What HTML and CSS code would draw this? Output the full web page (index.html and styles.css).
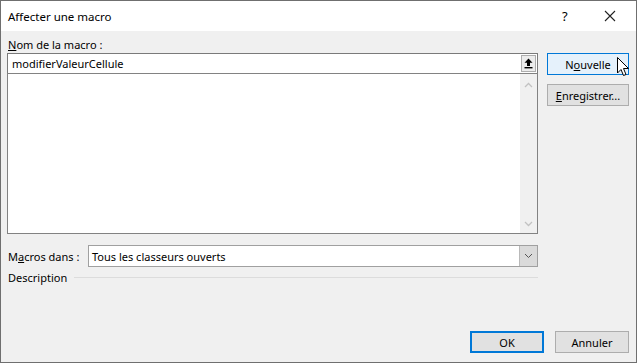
FILE: index.html
```html
<!DOCTYPE html>
<html>
  <head>
    <title>Affecter une macro</title>
    <link rel="stylesheet" href="styles.css">
  </head>
  <body>
    <div class="window">
      <div class="titlebar">
        <span class="title">Affecter une macro</span>
        <span class="help">?</span>
        <span class="close">
          <svg width="12" height="12" viewBox="0 0 12 12"><path d="M1 1 L11 11 M11 1 L1 11" stroke="#222" stroke-width="1.1" fill="none"/></svg>
        </span>
      </div>
      <div class="content">
        <div class="main">
          <div class="label"><u>N</u>om de la macro :</div>
          <div class="namebox">
            <span class="nametext">modifierValeurCellule</span>
            <span class="upbtn">
              <svg width="9" height="11" viewBox="0 0 9 11"><path d="M4.5 0.5 L8.5 4.8 L6 4.8 L6 8 L3 8 L3 4.8 L0.5 4.8 Z" fill="#000"/><rect x="0.5" y="9" width="8" height="1.4" fill="#000"/></svg>
            </span>
          </div>
          <div class="listbox">
            <div class="listarea"></div>
            <div class="scrollbar">
              <svg width="9" height="6" viewBox="0 0 9 6"><path d="M1 5 L4.5 1.5 L8 5" stroke="#c2c2c2" stroke-width="1.3" fill="none"/></svg>
              <svg width="9" height="6" viewBox="0 0 9 6"><path d="M1 1 L4.5 4.5 L8 1" stroke="#c2c2c2" stroke-width="1.3" fill="none"/></svg>
            </div>
          </div>
          <div class="row">
            <span class="label2">M<u>a</u>cros dans :</span>
            <div class="combo">
              <span class="combotext">Tous les classeurs ouverts</span>
              <span class="dropbtn">
                <svg width="9" height="6" viewBox="0 0 9 6"><path d="M1 1 L4.5 4.5 L8 1" stroke="#555" stroke-width="1" fill="none"/></svg>
              </span>
            </div>
          </div>
          <div class="desc">
            <span>Description</span>
            <span class="rule"></span>
          </div>
        </div>
        <div class="side">
          <div class="btn hover">N<u>o</u>uvelle
            <svg class="cursor" width="13" height="20" viewBox="0 0 13 20"><path d="M0.5 0.5 L0.5 16 L4 12.5 L6.5 18.5 L9 17.5 L6.5 11.5 L11.5 11.5 Z" fill="#fff" stroke="#000" stroke-width="1"/></svg>
          </div>
          <div class="btn"><u>E</u>nregistrer...</div>
        </div>
      </div>
      <div class="footer">
        <div class="btn fbtn default">OK</div>
        <div class="btn fbtn">Annuler</div>
      </div>
    </div>
  </body>
</html>
```

FILE: styles.css
```css
html,
body {
  margin: 0;
  padding: 0;
}
body {
  font-family: "Noto Sans", "Open Sans", sans-serif;
  font-size: 11px;
  color: #000;
  background: #f0f0f0;
}
.window {
  width: 637px;
  height: 363px;
  box-sizing: border-box;
  border: 1px solid #6f6f6f;
  background: #f0f0f0;
  display: flex;
  flex-direction: column;
}
.titlebar {
  height: 30px;
  background: #fff;
  display: flex;
  align-items: center;
  padding-left: 7px;
  font-size: 11.5px;
}
.title {
  flex: 1;
}
.help {
  width: 14px;
  margin-right: 28px;
  font-size: 13px;
}
.close {
  width: 12px;
  margin-right: 20px;
  display: flex;
}
.content {
  display: flex;
  padding: 0 0 0 6px;
  gap: 9px;
}
.main {
  width: 531px;
}
.label {
  height: 22px;
  line-height: 16px;
  padding: 6px 0 0 1px;
  box-sizing: border-box;
}
.namebox {
  height: 20px;
  box-sizing: border-box;
  border: 1px solid #7a7a7a;
  border-bottom: none;
  background: #fff;
  display: flex;
  align-items: center;
  padding-left: 4px;
}
.nametext {
  flex: 1;
}
.upbtn {
  width: 15px;
  height: 17px;
  margin-right: 1px;
  box-sizing: border-box;
  border: 1px solid #adadad;
  background: #ececec;
  display: flex;
  align-items: center;
  justify-content: center;
}
.listbox {
  height: 161px;
  box-sizing: border-box;
  border: 1px solid #828282;
  background: #fff;
  display: flex;
}
.listarea {
  flex: 1;
}
.scrollbar {
  width: 17px;
  background: #f0f0f0;
  display: flex;
  flex-direction: column;
  align-items: center;
  justify-content: space-between;
  padding: 8px 0 6px;
}
.row {
  display: flex;
  align-items: center;
  margin-top: 11px;
  height: 22px;
}
.label2 {
  width: 80px;
  padding-left: 1px;
}
.combo {
  flex: 1;
  height: 22px;
  box-sizing: border-box;
  border: 1px solid #a0a0a0;
  background: #fff;
  display: flex;
  align-items: center;
  padding-left: 3px;
}
.combotext {
  flex: 1;
}
.dropbtn {
  width: 17px;
  height: 20px;
  background: #dadada;
  border-left: 1px solid #b9b9b9;
  display: flex;
  align-items: center;
  justify-content: center;
}
.desc {
  display: flex;
  align-items: center;
  height: 20px;
  padding-left: 1px;
}
.rule {
  flex: 1;
  height: 1px;
  background: #dcdcdc;
  margin-left: 7px;
}
.side {
  width: 82px;
  padding-top: 22px;
  display: flex;
  flex-direction: column;
  gap: 9px;
}
.btn {
  position: relative;
  height: 22px;
  box-sizing: border-box;
  border: 1px solid #adadad;
  background: #e1e1e1;
  display: flex;
  align-items: center;
  justify-content: center;
}
.btn.hover {
  background: #e5f1fb;
  border-color: #0078d7;
}
.cursor {
  position: absolute;
  left: 69px;
  top: 3px;
}
.footer {
  margin-top: auto;
  display: flex;
  justify-content: flex-end;
  gap: 11px;
  padding: 0 7px 9px 0;
}
.fbtn {
  width: 74px;
}
.btn.default {
  border: 2px solid #0078d7;
}
```
